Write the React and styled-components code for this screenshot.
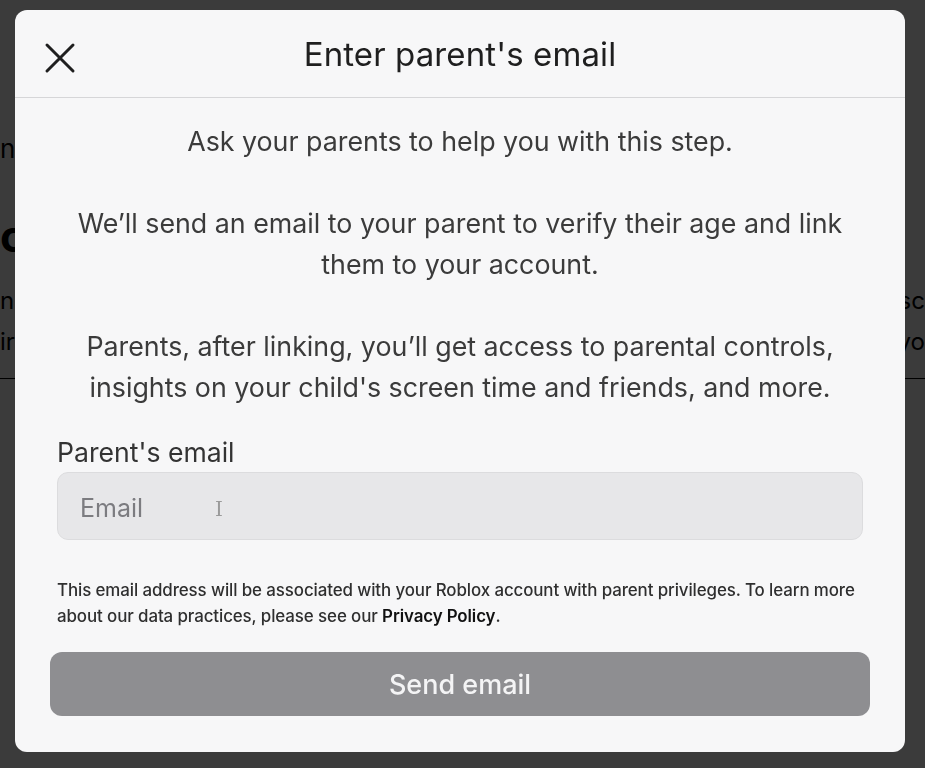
import React from "react";
import styled, { createGlobalStyle } from "styled-components";

const Global = createGlobalStyle`
  html, body { margin: 0; padding: 0; }
  body {
    width: 925px;
    height: 768px;
    overflow: hidden;
    background: #ffffff;
    font-family: Inter, "Noto Sans", sans-serif;
  }
`;

const Page = styled.div`
  width: 925px;
  height: 768px;
  display: flex;
  flex-direction: column;
  padding-top: 128px;
  box-sizing: border-box;
  color: #000;
`;

const BgLine = styled.div`
  display: flex;
  justify-content: space-between;
  font-size: ${(p) => p.$size || 24}px;
  font-weight: ${(p) => p.$weight || 400};
  line-height: ${(p) => p.$lh || 42}px;
  margin-top: ${(p) => p.$mt || 0}px;
`;

const BgRule = styled.div`
  height: 1px;
  background: #000;
  margin-top: 16px;
`;

const Overlay = styled.div`
  position: fixed;
  inset: 0;
  background: rgba(0, 0, 0, 0.77);
  display: flex;
  justify-content: center;
  padding-top: 10px;
  box-sizing: border-box;
`;

const Modal = styled.div`
  width: 890px;
  height: 742px;
  margin-left: -5px;
  background: #f7f7f8;
  border-radius: 12px;
  display: flex;
  flex-direction: column;
  overflow: hidden;
`;

const Header = styled.div`
  height: 88px;
  display: grid;
  grid-template-columns: 88px 1fr 88px;
  align-items: center;
  border-bottom: 1.5px solid #d6d6d8;
  box-sizing: border-box;
`;

const CloseButton = styled.button`
  width: 40px;
  height: 40px;
  margin-left: 25px;
  margin-top: 8px;
  padding: 0;
  border: 0;
  background: transparent;
  display: flex;
  align-items: center;
  justify-content: center;
  cursor: pointer;
`;

const Title = styled.h1`
  margin: 0;
  text-align: center;
  font-size: 33px;
  line-height: 40px;
  font-weight: 400;
  color: #1f1f1f;
  letter-spacing: 0.1px;
`;

const Body = styled.div`
  display: flex;
  flex-direction: column;
  padding: 23px 42px 0 42px;
`;

const Para = styled.p`
  margin: 0 0 41px 0;
  text-align: center;
  font-size: 26.8px;
  line-height: 41px;
  color: #3b3b3b;
`;

const Field = styled.div`
  display: flex;
  flex-direction: column;
  margin-top: -14px;
`;

const Label = styled.label`
  font-size: 26.6px;
  line-height: 34px;
  color: #333;
  margin-bottom: 3px;
`;

const InputBox = styled.div`
  position: relative;
  height: 68px;
  border-radius: 11px;
  background: #e7e7e9;
  border: 1px solid #dcdcde;
  box-sizing: border-box;
`;

const Input = styled.input`
  width: 100%;
  height: 100%;
  border: 0;
  background: transparent;
  padding: 3px 22px 0 22px;
  box-sizing: border-box;
  font-family: inherit;
  font-size: 25px;
  color: #333;
  outline: none;
  &::placeholder { color: #7c7c80; }
`;

const Caret = styled.span`
  position: absolute;
  left: 157px;
  top: 26px;
  font-family: "DejaVu Serif", serif;
  font-size: 20px;
  line-height: 20px;
  color: #9a9a9a;
  pointer-events: none;
`;

const Notice = styled.p`
  margin: 37px 0 0 0;
  font-size: 16.9px;
  font-weight: 500;
  line-height: 26px;
  color: #2f2f2f;
  letter-spacing: -0.1px;
`;

const Link = styled.a`
  color: #111;
  font-weight: 600;
  text-decoration: none;
`;

const SendButton = styled.button`
  margin: 23px -7px 0 -7px;
  height: 64px;
  border: 0;
  border-radius: 12px;
  background: #8e8e91;
  color: #f4f4f5;
  font-family: inherit;
  font-size: 27px;
  font-weight: 500;
  cursor: default;
`;

export default function App() {
  return (
    <>
      <Global />
      <Page>
        <BgLine $size={26}><span>n</span><span></span></BgLine>
        <BgLine $size={44} $weight={700} $lh={60} $mt={36}><span>c</span><span></span></BgLine>
        <BgLine $mt={14}><span>n</span><span>sc</span></BgLine>
        <BgLine $lh={40}><span>ir</span><span>yo</span></BgLine>
        <BgRule />
      </Page>
      <Overlay>
        <Modal role="dialog" aria-label="Enter parent's email">
          <Header>
            <CloseButton aria-label="Close">
              <svg width="32" height="32" viewBox="0 0 32 32">
                <path d="M3 3 L29 29 M29 3 L3 29" stroke="#1f1f1f" strokeWidth="3" strokeLinecap="round" fill="none" />
              </svg>
            </CloseButton>
            <Title>Enter parent's email</Title>
            <span />
          </Header>
          <Body>
            <Para>Ask your parents to help you with this step.</Para>
            <Para>We’ll send an email to your parent to verify their age and link them to your account.</Para>
            <Para>Parents, after linking, you’ll get access to parental controls, insights on your child's screen time and friends, and more.</Para>
            <Field>
              <Label htmlFor="pe">Parent's email</Label>
              <InputBox>
                <Input id="pe" placeholder="Email" />
                <Caret>I</Caret>
              </InputBox>
            </Field>
            <Notice>
              This email address will be associated with your Roblox account with parent privileges. To learn more about our data practices, please see our <Link href="#">Privacy Policy</Link>.
            </Notice>
            <SendButton>Send email</SendButton>
          </Body>
        </Modal>
      </Overlay>
    </>
  );
}
